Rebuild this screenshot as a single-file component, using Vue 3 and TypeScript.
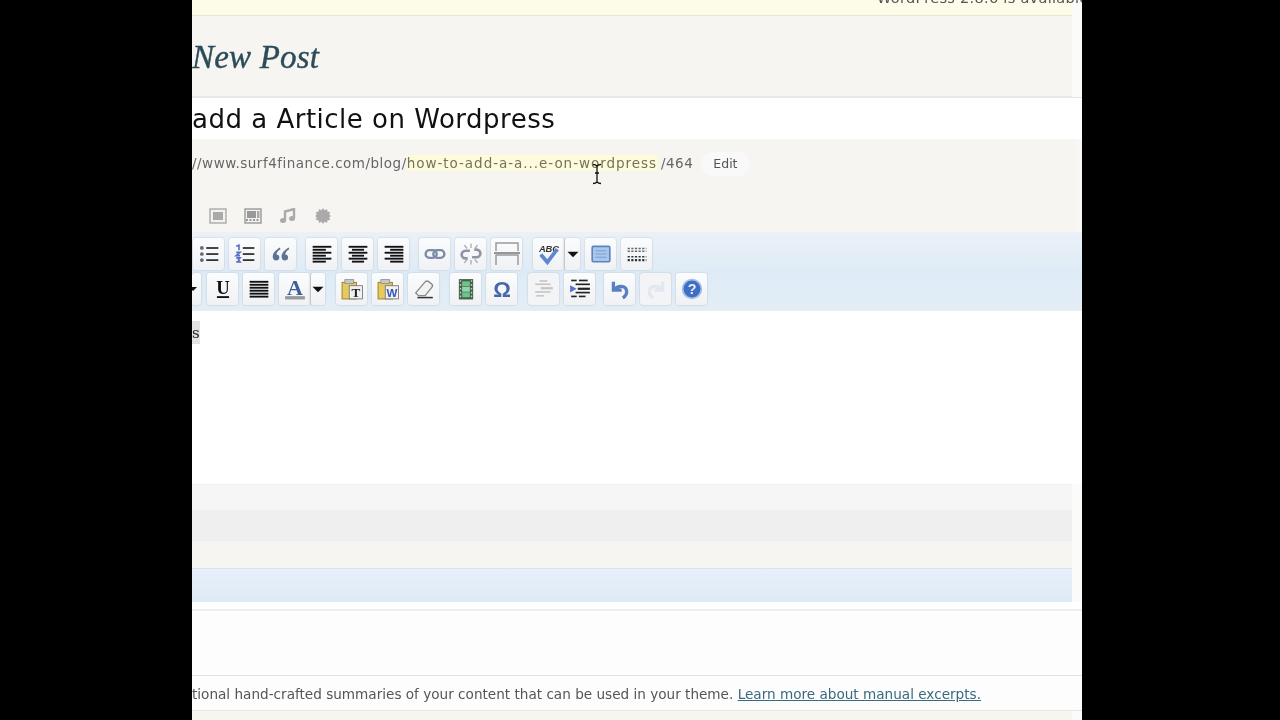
<script setup lang="ts">
interface Btn { k: string; art: string; w?: number; off?: boolean }
const L = '#111'
const lines = (rows: [number, number][]) => rows.map(([a, b], i) => `<rect x="${a}" y="${2.6 + i * 2.7}" width="${b}" height="1.700" fill="${L}"/>`).join('')
const alignL = lines([[1.500, 17], [1.500, 12], [1.500, 17], [1.500, 12], [1.500, 17], [1.500, 12]])
const alignC = lines([[1.500, 17], [4.500, 11], [1.500, 17], [4.500, 11], [1.500, 17], [4.500, 11]])
const alignR = lines([[1.500, 17], [6.500, 12], [1.500, 17], [6.500, 12], [1.500, 17], [6.500, 12]])
const justify = lines([[1.500, 17], [1.500, 17], [1.500, 17], [1.500, 17], [1.500, 17], [1.500, 17]])
const bullets = '<g fill="#667"><circle cx="3.500" cy="4.500" r="1.700"/><circle cx="3.500" cy="10" r="1.700"/><circle cx="3.500" cy="15.500" r="1.700"/></g><g fill="#222"><rect x="7.500" y="3.800" width="11" height="1.500"/><rect x="7.500" y="9.300" width="11" height="1.500"/><rect x="7.500" y="14.800" width="11" height="1.500"/></g>'
const numbered = '<g fill="none" stroke="#5a6fc0" stroke-width="1.500"><path d="M2 3l2.500-1v4.500M2 8.500h3.500l-3.500 3h3.500M2 13.500h3.500l-1.500 1.800 1.500 1.800H2"/></g><g fill="#222"><rect x="8" y="3.800" width="10.500" height="1.500"/><rect x="8" y="9.300" width="10.500" height="1.500"/><rect x="8" y="14.800" width="10.500" height="1.500"/></g>'
const quote = '<g fill="#5d7396"><path d="M9 4C6 5.800 2.500 8.500 2.500 12.500c0 2 1.200 3.500 3 3.500s3-1.200 3-2.800-1.200-2.700-2.700-2.700c.3-2 1.500-3.500 3.700-4.800z"/><path d="M17 4c-3 1.800-6.500 4.500-6.500 8.500 0 2 1.200 3.500 3 3.500s3-1.200 3-2.800-1.200-2.700-2.700-2.700c.3-2 1.500-3.500 3.700-4.800z"/></g>'
const link = '<g fill="none" stroke="#7d8aa8" stroke-width="2.200"><rect x="1.500" y="6.500" width="10" height="7" rx="3.500"/><rect x="8.500" y="6.500" width="10" height="7" rx="3.500"/></g>'
const unlink = '<g fill="none" stroke="#8d94a6" stroke-width="2.400"><path d="M9 7H5a3.500 3.500 0 0 0 0 7h2M11 13h4a3.500 3.500 0 0 0 0-7h-2"/></g><g stroke="#a5a5a5" stroke-width="1.100"><path d="M10 .500v4M10 15.500v4M4 2l2.500 3M13.500 15l2.500 3M16 2l-2.500 3M6.500 15L4 18"/></g>'
const more = '<g fill="none" stroke="#9a9a9a" stroke-width="1.500"><path d="M3 9V1h22v8M3 23v-10h22v10"/><path d="M1 11h26" stroke="#777"/></g>'
const spell = '<text x="10" y="7.800" text-anchor="middle" font-family="Liberation Sans" font-size="8.500" font-weight="700" font-style="italic" fill="#333">ABC</text><path d="M2.500 10.500l6 7 9-12" fill="none" stroke="#5f86cf" stroke-width="3.400"/>'
const caret = '<path d="M5 8h10l-5 5z" fill="#111"/>'
const full = '<rect x="2" y="3" width="16" height="14" rx="1" fill="#a9c6ec" stroke="#5c84bd" stroke-width="1.500"/><path d="M5 7h10M5 10h10M5 13h10" stroke="#7c9fd0"/>'
const kitchen = '<g fill="none" stroke="#333" stroke-dasharray="2 1.300" stroke-width="1.300"><path d="M1.500 5h17M1.500 7.500h17" stroke="#666"/><path d="M1.500 12.500h17"/><path d="M1.500 15.500h17" stroke-width="2"/></g>'
const under = '<text x="10" y="14.500" text-anchor="middle" font-family="Liberation Serif" font-size="17" font-weight="700" fill="#111">U</text><rect x="4.500" y="16.500" width="11" height="1.700" fill="#111"/>'
const color = '<text x="10" y="15" text-anchor="middle" font-family="Liberation Serif" font-size="20" font-weight="700" fill="#3f5f95">A</text><rect x="1" y="16.500" width="18" height="3" fill="#999"/>'
const pasteBase = '<rect x="1" y="4" width="13" height="15" fill="#e6cb5c" stroke="#a58a30"/><rect x="3.500" y="1.500" width="8" height="3.500" fill="#c9c9c9" stroke="#888" stroke-width=".700"/><rect x="7.500" y="7" width="12" height="12" fill="#f1f1f1" stroke="#777" stroke-width=".800"/>'
const pasteT = pasteBase + '<text x="13.500" y="17" text-anchor="middle" font-family="Liberation Serif" font-size="12" font-weight="700" fill="#222">T</text>'
const pasteW = pasteBase + '<text x="13.500" y="17" text-anchor="middle" font-family="Liberation Sans" font-size="10.500" font-weight="700" fill="#3557b5">W</text>'
const eraser = '<path d="M2.500 13.500L11 3.500c1-1 2-1 3-.4l3 2.400c1 1 1 2 .1 3L11 16H5z" fill="#f2f2f2" stroke="#888" stroke-width="1.200"/><path d="M4 17.800h14" stroke="#333" stroke-width="1.400"/>'
const media = '<rect x="3.500" y="1" width="13" height="18.500" fill="#46604b"/><rect x="6.500" y="3" width="7" height="4.500" fill="#6fc28a"/><rect x="6.500" y="8" width="7" height="4.500" fill="#8fd6a8"/><rect x="6.500" y="13" width="7" height="4.500" fill="#6fc28a"/><path d="M5 2v17M15 2v17" stroke="#c5d0c6" stroke-width="1.200" stroke-dasharray="1.500 2"/>'
const omega = '<text x="10" y="17" text-anchor="middle" font-family="Liberation Sans" font-size="20" font-weight="700" fill="#4566aa">Ω</text>'
const outdent = '<g fill="#c4c4c4"><rect x="6" y="2" width="7" height="1.400"/><rect x="2" y="5" width="14" height="1.400"/><rect x="7" y="8.300" width="11" height="2"/><rect x="2" y="12" width="14" height="1.400"/><rect x="3" y="15.500" width="7" height="1.400"/></g>'
const indent = '<g fill="#222"><rect x="2" y="1.500" width="5" height="1.500"/><rect x="9" y="1.500" width="8" height="1.500"/><rect x="6" y="5" width="13" height="1.500"/><rect x="8" y="8.800" width="11" height="2"/><rect x="6" y="12.500" width="13" height="1.500"/><rect x="2" y="16" width="5" height="1.500"/><rect x="9" y="16" width="6" height="1.500"/></g><path d="M1 6.500l6 3.300-6 3.300z" fill="#5a6fd0"/>'
const undo = '<path d="M4 3.500v7.500h7.500M4.800 10.500C8 6.500 15 6.500 16 11.500c.4 2.500-1 5-3.500 6.500" fill="none" stroke="#5c7fc0" stroke-width="3"/>'
const redo = '<path d="M16 3.500v7.500H8.500M15.200 10.500C12 6.500 5 6.500 4 11.500c-.4 2.500 1 5 3.500 6.500" fill="none" stroke="#e2e8f0" stroke-width="3"/>'
const help = '<circle cx="10" cy="10" r="8.500" fill="#3f6fc4" stroke="#a7bfe6" stroke-width="1.600"/><text x="10" y="14.500" text-anchor="middle" font-family="Liberation Sans" font-size="13" font-weight="700" fill="#e8eefc">?</text>'

const row1: Btn[][] = [
  [{ k: 'b', art: bullets }, { k: 'n', art: numbered }, { k: 'q', art: quote }],
  [{ k: 'l', art: alignL }, { k: 'c', art: alignC }, { k: 'r', art: alignR }],
  [{ k: 'li', art: link }, { k: 'u', art: unlink }, { k: 'm', art: more, w: 31 }],
  [{ k: 's', art: spell }, { k: 'sd', art: caret, w: 16 }, { k: 'f', art: full }, { k: 'ki', art: kitchen }],
]
const row2: Btn[][] = [
  [{ k: 'u', art: under }, { k: 'j', art: justify }, { k: 'a', art: color }, { k: 'ad', art: caret, w: 15 }],
  [{ k: 'pt', art: pasteT }, { k: 'pw', art: pasteW }, { k: 'e', art: eraser }],
  [{ k: 'me', art: media }, { k: 'o', art: omega }],
  [{ k: 'ou', art: outdent, off: true }, { k: 'in', art: indent }],
  [{ k: 'un', art: undo }, { k: 're', art: redo, off: true }, { k: 'h', art: help }],
]
const attached = ['sd', 'ad']
</script>

<template>
  <div class="stage">
    <main class="frame">
      <div class="notice"><span>WordPress 2.8.6 is available</span></div>
      <header class="heading"><h1>New Post</h1></header>
      <div class="title">add a Article on Wordpress</div>

      <section class="meta">
        <div class="permalink">
          <span>//www.surf4finance.com/blog/</span><span class="slug">how-to-add-a-a...e-on-wordpress</span><span class="post-id">/464</span>
          <span class="edit">Edit</span>
        </div>
        <div class="media-row">
          <svg viewBox="0 0 18 16"><rect x="1" y="1" width="16" height="14" fill="#f2f2f0" stroke="#aaa" stroke-width="1.400"/><rect x="4" y="4" width="10" height="8" fill="#aaa"/></svg>
          <svg viewBox="0 0 18 16"><rect x="1" y="1" width="16" height="14" fill="#f2f2f0" stroke="#999" stroke-width="1.400"/><rect x="3" y="3" width="9" height="7" fill="#999"/><rect x="13" y="3" width="2.500" height="7" fill="#aaa"/><path d="M2 12h14" stroke="#999" stroke-dasharray="2 1.500" stroke-width="2"/></svg>
          <svg viewBox="0 0 18 16"><path d="M6 12V3.500L15 1v9" fill="none" stroke="#aaa" stroke-width="2.400"/><ellipse cx="4" cy="12.500" rx="3" ry="2.500" fill="#aaa"/><ellipse cx="13" cy="10.500" rx="3" ry="2.500" fill="#aaa"/></svg>
          <svg viewBox="0 0 18 16"><path d="M9 0l1.600 2.200L13 1l.5 2.700 2.700.3-1 2.500L17 8l-1.800 1.500 1 2.500-2.700.3L13 15l-2.400-1.200L9 16l-1.600-2.200L5 15l-.5-2.700-2.700-.3 1-2.500L1 8l1.800-1.500-1-2.500 2.700-.3L5 1l2.400 1.200z" fill="#aaa"/></svg>
        </div>
      </section>

      <section class="toolbar">
        <div class="tool-row first">
          <div v-for="(group, i) in row1" :key="i" class="tool-group">
            <span v-for="b in group" :key="b.k" class="btn" :class="{ off: b.off, attached: attached.includes(b.k), tall: b.k === 'm' }" :style="b.w ? { width: b.w + 'px' } : undefined">
              <svg :viewBox="b.k === 'm' ? '0 0 28 24' : '0 0 20 20'" v-html="b.art"></svg>
            </span>
          </div>
        </div>
        <div class="tool-row second">
          <span class="btn stub"><i class="stub-caret"></i></span>
          <div v-for="(group, i) in row2" :key="i" class="tool-group">
            <span v-for="b in group" :key="b.k" class="btn" :class="{ off: b.off, attached: attached.includes(b.k) }" :style="b.w ? { width: b.w + 'px' } : undefined">
              <svg viewBox="0 0 20 20" v-html="b.art"></svg>
            </span>
          </div>
        </div>
      </section>

      <section class="editor"><span class="selected">s</span></section>

      <div class="band light"></div>
      <div class="band grey"></div>
      <div class="band beige"></div>
      <div class="band blue"></div>
      <div class="band gap"></div>
      <div class="band blank"></div>
      <p class="hint">tional hand-crafted summaries of your content that can be used in your theme. <a>Learn more about manual excerpts.</a></p>
      <div class="band tail"></div>

      <svg class="cursor" viewBox="0 0 12 22"><path d="M2 1.500c2 0 3 .5 4 1.500 1-1 2-1.500 4-1.500M6 3v16M2 20.500c2 0 3-.5 4-1.500 1 1 2 1.500 4 1.500M4 10h4" fill="none" stroke="#111" stroke-width="1.300"/></svg>
    </main>
  </div>
</template>

<style>
html, body { margin: 0; background: #000; }
</style>

<style scoped>
.stage { width: 1280px; height: 720px; background: #000; padding-left: 192px; box-sizing: border-box; overflow: hidden; }
.frame {
  position: relative;
  width: 890px;
  height: 720px;
  overflow: hidden;
  background: #fbfbfa;
  font-family: "DejaVu Sans", "Liberation Sans", sans-serif;
  filter: blur(0.5px);
}
.notice { height: 15px; background: #fdfce8; border-bottom: 1px solid #e8e7d4; margin-right: 10px; position: relative; }
.notice span { position: absolute; left: 685px; top: -10px; font-size: 14.500px; line-height: 16px; letter-spacing: .3px; color: #555; white-space: nowrap; }
.heading { height: 81px; background: #f6f5f2; border-bottom: 1px solid #e9e8e6; margin-right: 10px; box-sizing: border-box; display: flex; align-items: center; padding-top: 3px; }
.heading h1 { margin: 0; font: italic 400 33px "Liberation Serif", serif; letter-spacing: .2px; -webkit-text-stroke: .4px #2b4c58; color: #2b4c58; }
.title { height: 41px; line-height: 42px; background: #fff; border-top: 1px solid #e6e6e4; font-size: 26px; letter-spacing: .5px; color: #111; white-space: nowrap; }
.meta { background: linear-gradient(90deg, #f6f5f2 98.700%, #f9f8f6); height: 93px; box-sizing: border-box; padding-top: 14px; }
.permalink { display: flex; align-items: center; height: 20px; font: 13.500px "DejaVu Sans", sans-serif; letter-spacing: .5px; color: #666; white-space: nowrap; }
.slug { background: #fdfbdc; color: #74745a; letter-spacing: .96px; padding-right: 1px; }
.post-id { margin-left: 3px; }
.edit { margin: 1px 0 0 8px; padding: 5px 12px; background: #f9f9f9; border-radius: 12px; color: #555; font-size: 12.500px; letter-spacing: 0; line-height: 14px; }
.media-row { display: flex; gap: 17px; margin: 35px 0 0 17px; }
.media-row svg { width: 18px; height: 16px; }
.toolbar { height: 79px; background: linear-gradient(#ecf1f7, #deebf6 50%, #e3edf6); display: flex; flex-direction: column; gap: 3px; padding-top: 6px; box-sizing: border-box; border-bottom: 1px solid #e9eef3; }
.tool-row { display: flex; gap: 11px; height: 32px; }
.first { margin-left: 1px; gap: 10px; }
.first .tool-group:last-child { margin-left: 1px; }
.second .tool-group:last-child { margin-left: -2px; }
.tool-group { display: flex; gap: 5px; }
.btn { width: 31px; height: 32px; box-sizing: border-box; display: flex; align-items: center; justify-content: center; background: linear-gradient(#fbfcfd, #eff1f4); border-radius: 3px; box-shadow: 0 0 2px #b4bcc5; }
.btn svg { width: 22px; height: 22px; flex: none; overflow: visible; }
.btn.tall svg { width: 28px; height: 32px; }
.btn.attached { margin-left: -5px; border-left: 1px solid #c4c8cc; }
.btn.off { background: #f2f4f6; }
.stub { width: 9px; margin-right: -5px; justify-content: flex-start; overflow: hidden; }
.stub-caret { display: block; margin-left: -3px; width: 0; height: 0; border: 4px solid transparent; border-top-color: #111; border-bottom: 0; }
.editor { height: 173px; background: #fff; padding-top: 14px; box-sizing: border-box; font: 15px/17px "DejaVu Serif", serif; color: #222; }
.selected { background: #e3e3e3; padding: 3px 0 2px; }
.band { margin-right: 10px; }
.light { height: 26px; background: #f6f6f6; border-top: 1px solid #f0f0f0; box-sizing: border-box; }
.grey { height: 31px; background: #efefef; }
.beige { height: 27px; background: #f7f5f2; }
.blue { height: 34px; background: linear-gradient(#e7f0fb, #deeaf5); border-top: 1px solid #dbe2ea; box-sizing: border-box; }
.gap { height: 7px; background: #fff; margin-right: 0; }
.blank { height: 66px; border-top: 2px solid #eeeeee; background: #fdfdfd; margin-right: 0; box-sizing: border-box; }
.hint { margin: 0; height: 36px; border-top: 1px solid #e2e2e2; border-bottom: 1px solid #e6e6e6; box-sizing: border-box; font: 13.600px/37px "DejaVu Sans", sans-serif; color: #555; white-space: nowrap; background: #fdfdfd; }
.hint a { color: #3a6a80; text-decoration: underline; }
.tail { height: 9px; background: #f7f5f0; }
.cursor { position: absolute; left: 399px; top: 163px; width: 12px; height: 22px; }
</style>
